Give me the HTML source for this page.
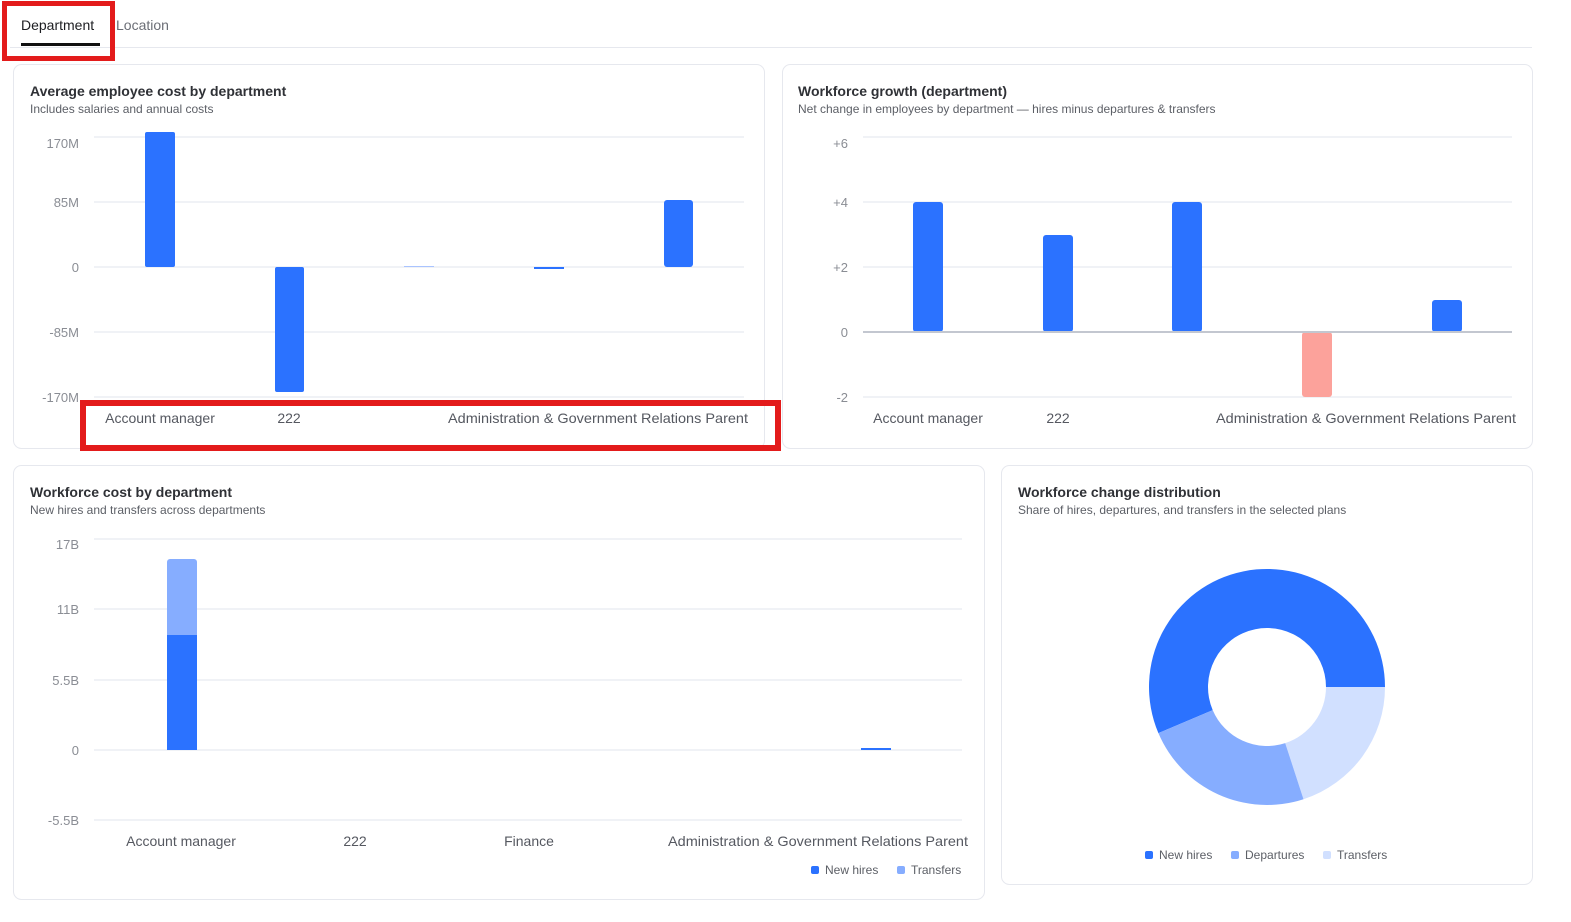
<!DOCTYPE html>
<html><head><meta charset="utf-8"><style>
html,body{margin:0;padding:0;background:#fff;width:1571px;height:922px;overflow:hidden}
svg{display:block}
text{font-family:"Liberation Sans",sans-serif}
.t{font-size:14px;font-weight:bold;fill:#2f3136}
.s{font-size:12px;fill:#5c5f66}
.y{font-size:13px;fill:#8a8d94;text-anchor:end}
.x{font-size:14px;fill:#555860}
.g{stroke:#eceef3;stroke-width:1.5}
.lg{font-size:12px;fill:#5c5f66}
</style></head><body>
<svg width="1571" height="922" viewBox="0 0 1571 922" xmlns="http://www.w3.org/2000/svg">
<!-- tabs -->
<line x1="10" y1="47.5" x2="1532" y2="47.5" stroke="#e6e8ee" stroke-width="1"/>
<text x="21" y="30" font-size="14" fill="#1c1d21">Department</text>
<rect x="21" y="43" width="79" height="3" fill="#111"/>
<text x="116" y="30" font-size="14" fill="#6b6e76">Location</text>
<rect x="4.5" y="3.5" width="108" height="55" fill="none" stroke="#e31b1b" stroke-width="5"/>

<!-- cards -->
<rect x="13.5" y="64.5" width="751" height="384" rx="8" fill="#fff" stroke="#e6e8ee"/>
<rect x="782.5" y="64.5" width="750" height="384" rx="8" fill="#fff" stroke="#e6e8ee"/>
<rect x="13.5" y="465.5" width="971" height="434" rx="8" fill="#fff" stroke="#e6e8ee"/>
<rect x="1001.5" y="465.5" width="531" height="419" rx="8" fill="#fff" stroke="#e6e8ee"/>

<!-- chart 1 -->
<text class="t" x="30" y="96">Average employee cost by department</text>
<text class="s" x="30" y="113">Includes salaries and annual costs</text>
<line class="g" x1="94" y1="137" x2="744" y2="137"/>
<line class="g" x1="94" y1="202" x2="744" y2="202"/>
<line class="g" x1="94" y1="267" x2="744" y2="267"/>
<line class="g" x1="94" y1="332" x2="744" y2="332"/>
<line class="g" x1="94" y1="397" x2="744" y2="397"/>
<text class="y" x="79" y="148">170M</text>
<text class="y" x="79" y="207">85M</text>
<text class="y" x="79" y="272">0</text>
<text class="y" x="79" y="337">-85M</text>
<text class="y" x="79" y="402">-170M</text>
<rect x="145" y="132" width="30" height="135" rx="2" fill="#2b72ff"/>
<rect x="275" y="267" width="29" height="125" rx="2" fill="#2b72ff"/>
<rect x="404" y="266" width="30" height="1" fill="#aac4ff"/>
<rect x="534" y="267" width="30" height="2" fill="#2b72ff"/>
<rect x="664" y="200" width="29" height="67" rx="3" fill="#2b72ff"/>
<text class="x" x="160" y="423" text-anchor="middle">Account manager</text>
<text class="x" x="289" y="423" text-anchor="middle">222</text>
<text class="x" x="448" y="423" textLength="300" lengthAdjust="spacingAndGlyphs">Administration &amp; Government Relations Parent</text>
<rect x="83" y="403" width="695" height="45" fill="none" stroke="#e31b1b" stroke-width="6"/>

<!-- chart 2 -->
<text class="t" x="798" y="96">Workforce growth (department)</text>
<text class="s" x="798" y="113">Net change in employees by department — hires minus departures &amp; transfers</text>
<line class="g" x1="863" y1="137" x2="1512" y2="137"/>
<line class="g" x1="863" y1="202" x2="1512" y2="202"/>
<line class="g" x1="863" y1="267" x2="1512" y2="267"/>
<line class="g" x1="863" y1="397" x2="1512" y2="397"/>
<text class="y" x="848" y="148">+6</text>
<text class="y" x="848" y="207">+4</text>
<text class="y" x="848" y="272">+2</text>
<text class="y" x="848" y="337">0</text>
<text class="y" x="848" y="402">-2</text>
<rect x="913" y="202" width="30" height="130" rx="3" fill="#2b72ff"/>
<rect x="1043" y="235" width="30" height="97" rx="3" fill="#2b72ff"/>
<rect x="1172" y="202" width="30" height="130" rx="3" fill="#2b72ff"/>
<rect x="1302" y="332" width="30" height="65" rx="3" fill="#fca29b"/>
<rect x="1432" y="300" width="30" height="32" rx="3" fill="#2b72ff"/>
<line x1="863" y1="332" x2="1512" y2="332" stroke="#c3c7d0" stroke-width="2"/>
<text class="x" x="928" y="423" text-anchor="middle">Account manager</text>
<text class="x" x="1058" y="423" text-anchor="middle">222</text>
<text class="x" x="1216" y="423" textLength="300" lengthAdjust="spacingAndGlyphs">Administration &amp; Government Relations Parent</text>

<!-- chart 3 -->
<text class="t" x="30" y="497">Workforce cost by department</text>
<text class="s" x="30" y="514">New hires and transfers across departments</text>
<line class="g" x1="94" y1="539" x2="962" y2="539"/>
<line class="g" x1="94" y1="609" x2="962" y2="609"/>
<line class="g" x1="94" y1="680" x2="962" y2="680"/>
<line class="g" x1="94" y1="750" x2="962" y2="750"/>
<line class="g" x1="94" y1="820" x2="962" y2="820"/>
<text class="y" x="79" y="549">17B</text>
<text class="y" x="79" y="614">11B</text>
<text class="y" x="79" y="685">5.5B</text>
<text class="y" x="79" y="755">0</text>
<text class="y" x="79" y="825">-5.5B</text>
<rect x="167" y="559" width="30" height="80" rx="3" fill="#86adff"/>
<rect x="167" y="635" width="30" height="115" fill="#2b72ff"/>
<rect x="861" y="748" width="30" height="2" fill="#2b72ff"/>
<text class="x" x="181" y="846" text-anchor="middle">Account manager</text>
<text class="x" x="355" y="846" text-anchor="middle">222</text>
<text class="x" x="529" y="846" text-anchor="middle">Finance</text>
<text class="x" x="668" y="846" textLength="300" lengthAdjust="spacingAndGlyphs">Administration &amp; Government Relations Parent</text>
<rect x="811" y="866" width="8" height="8" rx="2" fill="#2b72ff"/>
<text class="lg" x="825" y="874">New hires</text>
<rect x="897" y="866" width="8" height="8" rx="2" fill="#86adff"/>
<text class="lg" x="911" y="874">Transfers</text>

<!-- chart 4 -->
<text class="t" x="1018" y="497">Workforce change distribution</text>
<text class="s" x="1018" y="514">Share of hires, departures, and transfers in the selected plans</text>
<path d="M1158.4,733.1 A118,118 0 1 1 1385,687 L1326,687 A59,59 0 1 0 1212.7,710.1 Z" fill="#2b72ff"/>
<path d="M1385,687 A118,118 0 0 1 1303.5,799.2 L1285.2,743.1 A59,59 0 0 0 1326,687 Z" fill="#d1e0ff"/>
<path d="M1303.5,799.2 A118,118 0 0 1 1158.4,733.1 L1212.7,710.1 A59,59 0 0 0 1285.2,743.1 Z" fill="#86adff"/>
<rect x="1145" y="851" width="8" height="8" rx="2" fill="#2b72ff"/>
<text class="lg" x="1159" y="859">New hires</text>
<rect x="1231" y="851" width="8" height="8" rx="2" fill="#86adff"/>
<text class="lg" x="1245" y="859">Departures</text>
<rect x="1323" y="851" width="8" height="8" rx="2" fill="#d1e0ff"/>
<text class="lg" x="1337" y="859">Transfers</text>
</svg>
</body></html>
